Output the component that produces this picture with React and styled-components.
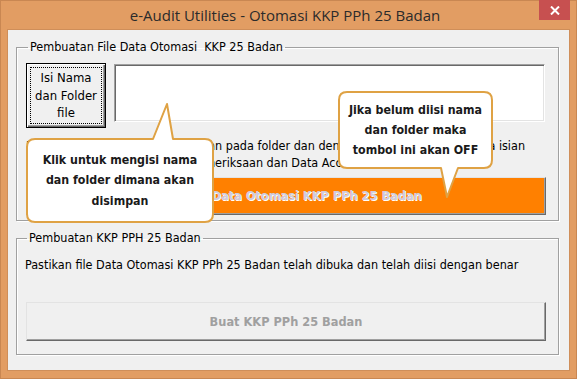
import React from "react";
import styled, { createGlobalStyle } from "styled-components";

const GlobalStyle = createGlobalStyle`
  html, body { margin: 0; padding: 0; }
  body {
    width: 577px;
    height: 379px;
    overflow: hidden;
    background: #E29D63;
    font-family: "DejaVu Sans Condensed", "DejaVu Sans", sans-serif;
  }
  * { box-sizing: border-box; }
`;

const Window = styled.div`
  position: relative;
  width: 577px;
  height: 379px;
  display: flex;
  flex-direction: column;
  background: #E29D63;
  box-shadow: inset 0 0 0 1px #C98752;
`;

const TitleBar = styled.div`
  height: 30px;
  flex: none;
  display: grid;
  grid-template-columns: 1fr auto 1fr;
  align-items: start;
  padding-right: 7px;
`;

const Title = styled.div`
  grid-column: 2;
  font-family: "Open Sans", "Noto Sans", sans-serif;
  font-size: 15px;
  line-height: 31px;
  color: #2b2b2b;
  white-space: nowrap;
`;

const CloseButton = styled.div`
  grid-column: 3;
  justify-self: end;
  width: 31px;
  height: 20px;
  background: #C75050;
  display: flex;
  align-items: center;
  justify-content: center;
`;

const Client = styled.div`
  flex: 1;
  margin: 0 8px 9px 8px;
  background: #F0F0F0;
  box-shadow: 0 0 0 1px #CF8E59;
  padding: 9px 10px 0 8px;
  display: flex;
  flex-direction: column;
  gap: 9px;
`;

const GroupBox = styled.fieldset`
  margin: 0;
  min-width: 0;
  border: 1px solid #A0A0A0;
  box-shadow: inset 1px 1px 0 #fff, 1px 1px 0 #fff;
  padding: ${(p) => p.$pad};
  display: flex;
  flex-direction: column;
`;

const Legend = styled.legend`
  margin-left: 2px;
  padding: 0 2px;
  font-size: 12.5px;
  line-height: 16px;
  color: #000;
  white-space: pre;
`;

const Row = styled.div`
  display: flex;
  align-items: flex-start;
  gap: 8px;
`;

const DefaultButton = styled.div`
  width: 80px;
  height: 65px;
  flex: none;
  border: 1px solid #000;
  background: #F0F0F0;
  box-shadow: inset 1px 1px 0 #fff, inset -1px -1px 0 #696969, inset -2px -2px 0 #A0A0A0;
  padding: 3px;
  display: flex;
`;

const FocusRect = styled.div`
  flex: 1;
  border: 1px dotted #000;
  display: flex;
  align-items: center;
  justify-content: center;
  text-align: center;
  font-size: 13px;
  line-height: 17.5px;
  color: #000;
`;

const TextBox = styled.div`
  flex: 1;
  height: 58px;
  margin-top: 1px;
  margin-right: 1px;
  background: #fff;
  border: 1px solid;
  border-color: #A0A0A0 #fff #fff #A0A0A0;
  box-shadow: inset 1px 1px 0 #696969, inset -1px -1px 0 #E3E3E3;
`;

const Desc = styled.div`
  margin-top: ${(p) => p.$mt};
  font-size: 12.5px;
  line-height: 17px;
  color: #000;
  white-space: nowrap;
`;

const ActionButton = styled.div`
  height: ${(p) => p.$h};
  margin-top: ${(p) => p.$mt};
  margin-left: ${(p) => p.$ml || "0px"};
  background: ${(p) => (p.$orange ? "#FF8000" : "#F0F0F0")};
  border-top: 1px solid #E3E3E3;
  border-left: 1px solid #E3E3E3;
  border-right: 1px solid #696969;
  border-bottom: 1px solid #696969;
  box-shadow: inset -1px -1px 0 #A0A0A0;
  display: flex;
  align-items: center;
  justify-content: center;
  font-family: "DejaVu Sans", sans-serif;
  font-weight: bold;
  font-size: 11.4px;
  color: ${(p) => (p.$orange ? "#CFCBDD" : "#A0A0A0")};
  text-shadow: ${(p) => (p.$orange ? "1px 1px 0 #fff" : "none")};
  white-space: nowrap;
`;

const CalloutWrap = styled.div`
  position: absolute;
  left: ${(p) => p.$x}px;
  top: ${(p) => p.$y}px;
  width: ${(p) => p.$w}px;
  height: ${(p) => p.$h}px;
`;

const CalloutShape = styled.svg`
  position: absolute;
  inset: 0;
  overflow: visible;
`;

const CalloutText = styled.div`
  position: absolute;
  left: ${(p) => p.$bx}px;
  top: ${(p) => p.$by}px;
  width: ${(p) => p.$bw}px;
  height: ${(p) => p.$bh}px;
  display: flex;
  align-items: center;
  justify-content: center;
  text-align: center;
  font-family: "DejaVu Sans Condensed", "DejaVu Sans", sans-serif;
  font-weight: bold;
  font-size: 12.3px;
  line-height: ${(p) => p.$lh}px;
  color: #1a1a1a;
`;

function Callout({ x, y, w, h, path, body, lh, children }) {
  return (
    <CalloutWrap $x={x} $y={y} $w={w} $h={h}>
      <CalloutShape width={w} height={h} viewBox={`0 0 ${w} ${h}`}>
        <path d={path} fill="#fff" stroke="#DFA244" strokeWidth="2" strokeLinejoin="round" />
      </CalloutShape>
      <CalloutText $bx={body[0]} $by={body[1]} $bw={body[2]} $bh={body[3]} $lh={lh}>
        <div>{children}</div>
      </CalloutText>
    </CalloutWrap>
  );
}

export default function App() {
  return (
    <>
      <GlobalStyle />
      <Window>
        <TitleBar>
          <Title>e-Audit Utilities - Otomasi KKP PPh 25 Badan</Title>
          <CloseButton>
            <svg width="10" height="9" viewBox="0 0 10 9">
              <path d="M1 0.5 L9 8.5 M9 0.5 L1 8.5" stroke="#fff" strokeWidth="2" />
            </svg>
          </CloseButton>
        </TitleBar>
        <Client>
          <GroupBox $pad="8px 12px 5px 9px">
            <Legend>Pembuatan File Data Otomasi  KKP 25 Badan</Legend>
            <Row>
              <DefaultButton>
                <FocusRect>
                  Isi Nama
                  <br />
                  dan Folder
                  <br />
                  file
                </FocusRect>
              </DefaultButton>
              <TextBox />
            </Row>
            <Desc $mt="9px">
              Pilih nama file yang akan disimpan pada folder dan dengan nama tersebut, isi data isian
              <br />
              Data Wajib Pajak, Data Team Pemeriksaan dan Data Account Officer
            </Desc>
            <ActionButton $orange $h="38px" $mt="6px">
              Buat File Data Otomasi KKP PPh 25 Badan
            </ActionButton>
          </GroupBox>
          <GroupBox $pad="10px 12px 13px 8px">
            <Legend>Pembuatan KKP PPH 25 Badan</Legend>
            <Desc $mt="0px">
              Pastikan file Data Otomasi KKP PPh 25 Badan telah dibuka dan telah diisi dengan benar
            </Desc>
            <ActionButton $h="39px" $mt="29px" $ml="1px">
              Buat KKP PPh 25 Badan
            </ActionButton>
          </GroupBox>
        </Client>
        <Callout
          x={26}
          y={103}
          w={188}
          h={120}
          path="M 9,36 L 127,36 L 141,1 L 147,36 L 179,36 Q 187,36 187,44 L 187,111 Q 187,119 179,119 L 9,119 Q 1,119 1,111 L 1,44 Q 1,36 9,36 Z"
          body={[1, 36, 186, 83]}
          lh={20.5}
        >
          Klik untuk mengisi nama
          <br />
          dan folder dimana akan
          <br />
          disimpan
        </Callout>
        <Callout
          x={338}
          y={91}
          w={156}
          h={107}
          path="M 9,1 L 146,1 Q 154,1 154,9 L 154,69 Q 154,77 146,77 L 120,77 L 109,106 L 103,77 L 9,77 Q 1,77 1,69 L 1,9 Q 1,1 9,1 Z"
          body={[1, 1, 153, 76]}
          lh={20}
        >
          Jika belum diisi nama
          <br />
          dan folder maka
          <br />
          tombol ini akan OFF
        </Callout>
      </Window>
    </>
  );
}
